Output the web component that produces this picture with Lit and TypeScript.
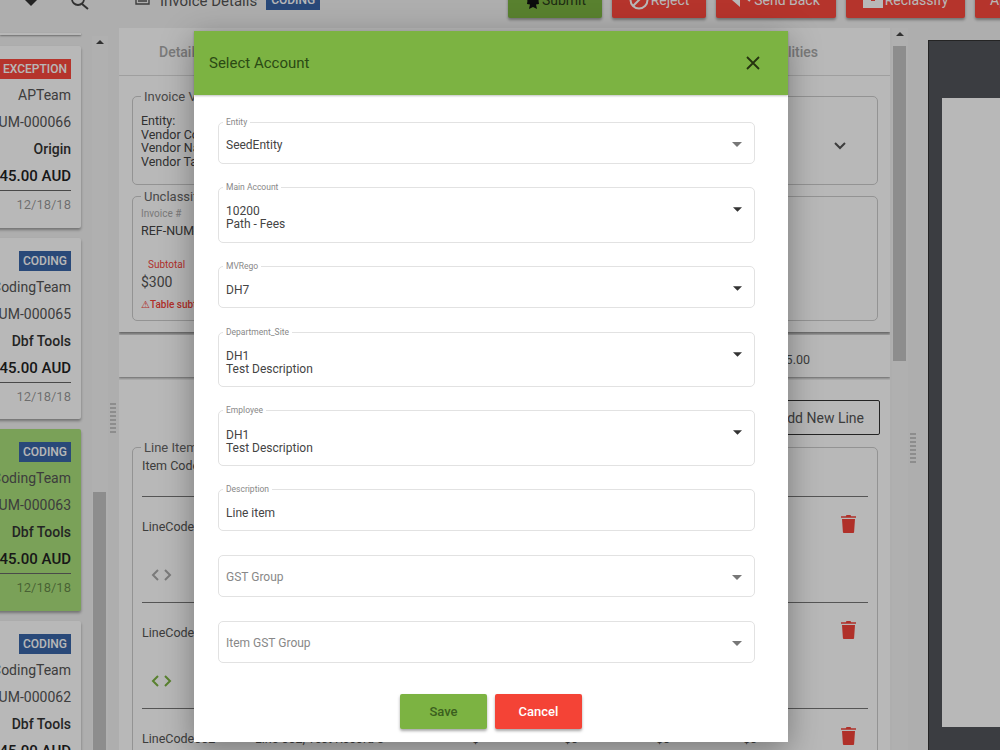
import { LitElement, html, css, svg } from "lit";
import { customElement } from "lit/decorators.js";

const caret = svg`<svg class="caret" width="10" height="5" viewBox="0 0 10 5"><path d="M0 0h10L5 5z" fill="currentColor"/></svg>`;

const trash = html`<svg class="trash" width="15" height="18" viewBox="0 0 15 18"><path d="M5.5 0h4l.7 1.200H15v1.600H0V1.200h4.800zM1 4h13l-.9 13a1 1 0 0 1-1 1H2.900a1 1 0 0 1-1-1z" fill="#f4433a"/></svg>`;

const codeIcon = (cls: string) => html`<svg class="code ${cls}" width="21" height="12" viewBox="0 0 21 12"><path d="M7 1 2 6l5 5M14 1l5 5-5 5" fill="none" stroke="currentColor" stroke-width="2"/></svg>`;

interface Card { badge: string; team: string; num: string; vendor: string; active?: boolean }
const cards: Card[] = [
  { badge: "EXCEPTION", team: "APTeam", num: "REF-NUM-000066", vendor: "Origin" },
  { badge: "CODING", team: "CodingTeam", num: "REF-NUM-000065", vendor: "Dbf Tools" },
  { badge: "CODING", team: "CodingTeam", num: "REF-NUM-000063", vendor: "Dbf Tools", active: true },
  { badge: "CODING", team: "CodingTeam", num: "REF-NUM-000062", vendor: "Dbf Tools" },
];

interface Field { label: string; lines: string[]; placeholder?: boolean; noCaret?: boolean; dark?: boolean }
const fields: Field[] = [
  { label: "Entity", lines: ["SeedEntity"] },
  { label: "Main Account", lines: ["10200", "Path - Fees"], dark: true },
  { label: "MVRego", lines: ["DH7"], dark: true },
  { label: "Department_Site", lines: ["DH1", "Test Description"], dark: true },
  { label: "Employee", lines: ["DH1", "Test Description"], dark: true },
  { label: "Description", lines: ["Line item"], noCaret: true },
  { label: "", lines: ["GST Group"], placeholder: true },
  { label: "", lines: ["Item GST Group"], placeholder: true },
];

@customElement("app-root")
export class AppRoot extends LitElement {
  static styles = css`
    :host { display: block; width: 1000px; height: 750px; position: relative; overflow: hidden;
      font-family: Roboto, "Liberation Sans", sans-serif; background: #f2f2f2; color: #222; }
    * { box-sizing: border-box; }
    .page { display: flex; height: 750px; overflow: hidden; }

    .side { width: 108px; flex: none; display: flex; flex-direction: column; position: relative; overflow: hidden; }
    .side-tools { height: 33px; flex: none; display: flex; gap: 33px; padding-left: 24px; align-items: flex-start; }
    .card-edge { height: 2px; flex: none; width: 81px; background: #fff; box-shadow: 0 1px 2px rgba(0,0,0,.4); }
    .cards { display: flex; flex-direction: column; gap: 10px; margin-top: 11px; margin-left: -20px; width: 101px; }
    .card { background: #fff; height: 181.500px; flex: none; padding: 13px 10px 0 0; display: flex; flex-direction: column; align-items: flex-end;
      border-radius: 2px; box-shadow: 0 2px 3px rgba(0,0,0,.35); font-size: 14px; white-space: nowrap; color: #555; }
    .card.active { background: #a9e07a; }
    .badge { height: 20px; line-height: 20px; padding: 0 4px; color: #fff; font-size: 12px; font-weight: 500; background: #3a66a8; margin-bottom: 3px; }
    .badge.ex { background: #fb483e; }
    .row { height: 27px; line-height: 27px; }
    .strong { font-weight: 500; color: #333; }
    .amount { font-weight: 500; font-size: 15px; color: #222; border-bottom: 1px solid #666; width: 100%; text-align: right; height: 28px; line-height: 27px; }
    .date { color: rgba(0,0,0,.42); height: 27px; line-height: 27px; font-size: 13px; }
    .scroll { position: absolute; right: 0; top: 36px; bottom: 0; width: 16px; background: #f4f4f4; display: flex; flex-direction: column; align-items: center; }
    .arrow { margin-top: 4px; width: 0; height: 0; border-left: 4px solid transparent; border-right: 4px solid transparent; border-bottom: 4px solid #444; }
    .thumb { background: #c4c4c4; width: 13px; position: absolute; left: 1px; }
    .side .thumb { top: 456px; bottom: 0; }

    .split { width: 11px; flex: none; position: relative; background: #f2f2f2; }
    .split.wide { width: 20px; }
    .grip { position: absolute; width: 6px; left: 2px; top: 403px; height: 30px;
      background: repeating-linear-gradient(#c4c4c4 0 2px, transparent 2px 4px); }
    .split.wide .grip { top: 405px; }

    .center { width: 881px; flex: none; position: relative; overflow: hidden; }
    .head { height: 28px; position: relative; }
    .title { position: absolute; left: 41px; top: -9px; font-size: 15px; color: #555; white-space: nowrap; display: flex; align-items: center; gap: 9px; }
    .title .badge { font-size: 12px; height: 19px; line-height: 19px; margin: 0; padding: 0 5px; }
    .doc { position: absolute; left: 16px; top: -5px; }
    .actions { position: absolute; left: 389px; top: -18px; display: flex; gap: 10px; }
    .act { height: 36px; border-radius: 2px; display: flex; align-items: center; justify-content: center; gap: 2px;
      box-shadow: 0 2px 3px rgba(0,0,0,.35); font-size: 14px; color: #fff; white-space: nowrap; background: #fb483e; flex: none; }
    .act.green { background: #7cb342; color: #2b3d1a; }
    .act svg { flex: none; }
    .w94 { width: 94px; }
    .w120 { width: 120px; }
    .w119 { width: 119px; }
    .last { width: 110px; justify-content: flex-start; padding-left: 15px; }

    .main-wrap { display: flex; height: 722px; }
    .main { width: 771px; flex: none; overflow: hidden; }
    .tabs { height: 48px; background: #fff; border-bottom: 1px solid #ddd; display: flex; justify-content: space-between; align-items: center;
      padding: 0 72px 0 40px; font-size: 14px; color: #aaa; font-weight: 500; }
    .top-card { background: #fff; height: 256px; padding: 20px 12px 0 13px; box-shadow: 0 2px 2px rgba(0,0,0,.4); display: flex; flex-direction: column; gap: 11px; }
    .set { border: 1px solid #ccc; border-radius: 5px; position: relative; padding: 0 8px; font-size: 12.500px; color: #444; }
    .legend { position: absolute; left: 8px; top: -7px; background: #fff; padding: 0 3px; font-size: 13px; color: #666; white-space: nowrap; line-height: 13px; }
    .set-1 { height: 89px; padding-top: 17px; line-height: 13.500px; }
    .set-1 svg { position: absolute; right: 30px; top: 44px; }
    .set-2 { height: 125px; padding-top: 11px; }
    .set-2 .lbl { font-size: 10px; color: #aaa; height: 12px; }
    .set-2 .val { margin-top: 3px; height: 24px; }
    .set-2 .sub { color: #f4433a; font-size: 10px; padding-left: 7px; margin-top: 12px; height: 13px; }
    .set-2 .money { font-size: 14px; color: #555; height: 27px; line-height: 20px; }
    .set-2 .warn { color: #f4433a; font-size: 10px; font-weight: 500; white-space: nowrap; }
    .totals { margin-top: 3px; height: 42px; background: #fff; box-shadow: 0 1px 2px rgba(0,0,0,.4); font-size: 12.500px; color: #555;
      display: flex; justify-content: flex-end; align-items: center; padding: 6px 80px 0 0; }
    .lines-card { margin-top: 3px; background: #fff; padding: 20px 12px 0 13px; height: 400px; }
    .add-row { display: flex; justify-content: flex-end; margin-right: -2px; }
    .add { width: 140px; height: 35px; border: 1px solid #333; border-radius: 2px; font-size: 14px; color: #555; display: flex; align-items: center; justify-content: flex-end; padding-right: 15px; }
    .set-3 { margin-top: 12px; height: 400px; padding: 10px 9px 0; }
    .colhead { font-size: 12.500px; color: #555; height: 39px; border-bottom: 1px solid #777; }
    .line { height: 106px; border-bottom: 1px solid #777; position: relative; font-size: 12.500px; color: #555; padding-top: 22px; }
    .line-row { display: grid; grid-template-columns: 113px 217px 92px 92px 87px 40px; white-space: nowrap; }
    .code { position: absolute; left: 9px; top: 72px; color: #aaa; }
    .code.on { color: #7cb342; }
    .trash { position: absolute; right: 12px; top: 18px; }

    .v-scroll { width: 16px; flex: none; margin-left: 2px; background: #f4f4f4; position: relative; display: flex; flex-direction: column; align-items: center; }
    .v-scroll .thumb { top: 18px; height: 315px; }

    .viewer { flex: 1; min-width: 0; background: #53555a; margin-top: 12px; padding: 57px 0 0 13px; height: 722px; border-left: 1px solid #333; border-top: 1px solid #333; }
    .sheet { background: #fff; height: 629px; }

    .overlay { position: absolute; inset: 0; background: rgba(0,0,0,.28); }
    .modal { position: absolute; left: 194px; top: 31px; width: 594px; height: 711px; background: #fff; box-shadow: 0 8px 30px rgba(0,0,0,.35); }
    .m-head { height: 64px; background: #7cb342; display: flex; align-items: center; justify-content: space-between; padding: 0 28px 0 15px;
      font-size: 15px; color: #2b4a14; box-shadow: 0 1px 2px rgba(0,0,0,.25); }
    .m-body { padding: 26.500px 33px 0 24px; display: flex; flex-direction: column; gap: 23.200px; }
    .field { border: 1px solid #e2e2e2; border-radius: 5px; position: relative; padding: 0 7px; font-size: 12px; color: #444; line-height: 13px; height: 42.500px; flex: none; display: flex; flex-direction: column; justify-content: center; }
    .field.two { height: 55.500px; padding-top: 7px; }
    .field.one { padding-top: 6px; }
    .field.ph { color: #888; padding-top: 2px; margin-top: .3px; }
    .f-label { position: absolute; left: 4px; top: -6px; font-size: 8.500px; line-height: 11px; color: #888; background: #fff; padding: 0 3px; }
    .caret { position: absolute; right: 12px; top: 19px; color: #777; }
    .dark .caret { color: #333; width: 9px; }
    .two .caret { top: 19px; }
    .m-foot { display: flex; justify-content: center; gap: 8px; margin-top: 31px; }
    .m-btn { width: 87px; height: 35px; border-radius: 2px; display: flex; align-items: center; justify-content: center; font-size: 13px; font-weight: 500;
      box-shadow: 0 2px 3px rgba(0,0,0,.35); }
    .save { background: #7cb342; color: #3b5f1e; }
    .cancel { background: #f44336; color: #fff; }
  `;

  private card(c: Card) {
    return html`<div class="card ${c.active ? "active" : ""}">
      <div class="badge ${c.badge === "EXCEPTION" ? "ex" : ""}">${c.badge}</div>
      <div class="row">${c.team}</div>
      <div class="row">${c.num}</div>
      <div class="row strong">${c.vendor}</div>
      <div class="amount">$345.00 AUD</div>
      <div class="date">12/18/18</div>
    </div>`;
  }

  private field(f: Field) {
    const cls = ["field", f.lines.length > 1 ? "two" : "one", f.placeholder ? "ph" : "", f.dark ? "dark" : ""].join(" ");
    return html`<div class="${cls}">
      ${f.label ? html`<span class="f-label">${f.label}</span>` : ""}
      ${f.lines.map((l) => html`<div>${l}</div>`)}
      ${f.noCaret ? "" : caret}
    </div>`;
  }

  private lineRow(code: string, text: string) {
    return html`<div class="line-row"><span>${code}</span><span>${text}</span><span>$</span><span>$0</span><span>$0</span><span>$0</span></div>`;
  }

  render() {
    return html`
      <div class="page">
        <div class="side">
          <div class="side-tools">
            <svg width="14" height="6" viewBox="0 0 14 6"><path d="M1 0h12L7 6z" fill="#333"/></svg>
            <svg width="20" height="10" viewBox="0 0 20 10"><circle cx="7" cy="-1" r="6" fill="none" stroke="#444" stroke-width="1.800"/><path d="M11 4l6 5" stroke="#444" stroke-width="2"/></svg>
          </div>
          <div class="card-edge"></div>
          <div class="cards">${cards.map((c) => this.card(c))}</div>
          <div class="scroll"><div class="arrow"></div><div class="thumb"></div></div>
        </div>
        <div class="split"><div class="grip"></div></div>
        <div class="center">
          <div class="head">
            <svg class="doc" width="15" height="10" viewBox="0 0 15 10"><path d="M1 0v9h13V0M3 3h9M3 6h9" fill="none" stroke="#555" stroke-width="1.400"/></svg>
            <div class="title">Invoice Details <span class="badge">CODING</span></div>
            <div class="actions">
              <div class="act green w94">
                <svg width="16" height="18" viewBox="0 0 16 18"><path d="M8 0l2 2 3-.4.500 3L16 7l-1.500 2.500L15 13l-3 .6L13 18l-4-2-4 2 1-4.400L3 13l.5-3.500L1 7l2.500-2.400.500-3L7 2z" fill="#111"/></svg>
                Submit
              </div>
              <div class="act w94">
                <svg width="20" height="20" viewBox="0 0 20 20"><circle cx="10" cy="10" r="8.500" fill="none" stroke="#fff" stroke-width="2"/><path d="M4 16 16 4" stroke="#fff" stroke-width="2"/></svg>
                Reject
              </div>
              <div class="act w120">
                <svg width="20" height="14" viewBox="0 0 20 14"><path d="M8 0v14L0 7z" fill="#fff"/><path d="M12 3l6 5" stroke="#fff" stroke-width="2"/></svg>
                Send Back
              </div>
              <div class="act w119">
                <svg width="20" height="16" viewBox="0 0 20 16"><path d="M0 0h20v5H0zM0 7h8v2h4V7h8v9H0z" fill="#fff"/></svg>
                Reclassify
              </div>
              <div class="act last">Approve</div>
            </div>
          </div>
          <div class="main-wrap">
            <div class="main">
              <div class="tabs"><span>Details</span><span>Utilities</span></div>
              <div class="top-card">
                <div class="set set-1">
                  <span class="legend">Invoice Validation</span>
                  <div>Entity:</div><div>Vendor Code:</div><div>Vendor Name:</div><div>Vendor Tax:</div>
                  <svg width="14" height="9" viewBox="0 0 14 9"><path d="M2 2l5 5 5-5" fill="none" stroke="#555" stroke-width="2"/></svg>
                </div>
                <div class="set set-2">
                  <span class="legend">Unclassified</span>
                  <div class="lbl">Invoice #</div>
                  <div class="val">REF-NUM-000063</div>
                  <div class="sub">Subtotal</div>
                  <div class="money">$300</div>
                  <div class="warn">⚠Table subtotal mismatch</div>
                </div>
              </div>
              <div class="totals">$345.00</div>
              <div class="lines-card">
                <div class="add-row"><div class="add">Add New Line</div></div>
                <div class="set set-3">
                  <span class="legend">Line Items</span>
                  <div class="colhead">Item Code</div>
                  <div class="line">${this.lineRow("LineCode000", "Line 000, Test Record 1")}${trash}${codeIcon("")}</div>
                  <div class="line">${this.lineRow("LineCode001", "Line 001, Test Record 2")}${trash}${codeIcon("on")}</div>
                  <div class="line">${this.lineRow("LineCode002", "Line 002, Test Record 3")}${trash}</div>
                </div>
              </div>
            </div>
            <div class="v-scroll"><div class="arrow"></div><div class="thumb"></div></div>
            <div class="split wide"><div class="grip"></div></div>
            <div class="viewer"><div class="sheet"></div></div>
          </div>
        </div>
      </div>
      <div class="overlay"></div>
      <div class="modal">
        <div class="m-head"><span>Select Account</span>
          <svg width="14" height="14" viewBox="0 0 14 14"><path d="M1 1l12 12M13 1L1 13" stroke="#25330f" stroke-width="1.800"/></svg>
        </div>
        <div class="m-body">${fields.map((f) => this.field(f))}</div>
        <div class="m-foot"><div class="m-btn save">Save</div><div class="m-btn cancel">Cancel</div></div>
      </div>
    `;
  }
}
